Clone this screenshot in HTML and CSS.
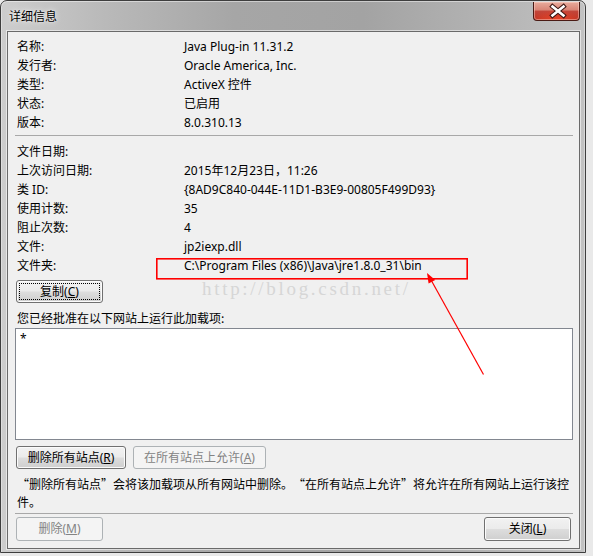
FILE: index.html
```html
<!DOCTYPE html>
<html lang="zh-CN">
<head>
<meta charset="utf-8">
<title>详细信息</title>
<link rel="stylesheet" href="styles.css">
</head>
<body>
<div class="window">
  <div class="titlebar">
    <span class="title">详细信息</span>
    <div class="close">
      <svg width="45" height="17" viewBox="0 0 45 17">
        <path d="M18.5 4.5 L29.5 13.5 M29.5 4.5 L18.5 13.5" stroke="#3a1410" stroke-width="4.6" stroke-linecap="square" fill="none"/>
        <path d="M18.5 4.5 L29.5 13.5 M29.5 4.5 L18.5 13.5" stroke="#ffffff" stroke-width="2.6" stroke-linecap="square" fill="none"/>
      </svg>
    </div>
  </div>
  <div class="panel">
    <div class="section first">
      <div class="row"><span class="label">名称:</span><span class="value">Java Plug-in 11.31.2</span></div>
      <div class="row"><span class="label">发行者:</span><span class="value">Oracle America, Inc.</span></div>
      <div class="row"><span class="label">类型:</span><span class="value">ActiveX 控件</span></div>
      <div class="row"><span class="label">状态:</span><span class="value">已启用</span></div>
      <div class="row"><span class="label">版本:</span><span class="value">8.0.310.13</span></div>
    </div>
    <div class="sep sep-top"></div>
    <div class="section second">
      <div class="row"><span class="label">文件日期:</span><span class="value"></span></div>
      <div class="row"><span class="label">上次访问日期:</span><span class="value">2015年12月23日，11:26</span></div>
      <div class="row"><span class="label">类 ID:</span><span class="value">{8AD9C840-044E-11D1-B3E9-00805F499D93}</span></div>
      <div class="row"><span class="label">使用计数:</span><span class="value">35</span></div>
      <div class="row"><span class="label">阻止次数:</span><span class="value">4</span></div>
      <div class="row"><span class="label">文件:</span><span class="value">jp2iexp.dll</span></div>
      <div class="row"><span class="label">文件夹:</span><span class="value">C:\Program Files (x86)\Java\jre1.8.0_31\bin</span></div>
    </div>
    <button class="btn focused w-copy">复制(<u>C</u>)</button>
    <div class="caption">您已经批准在以下网站上运行此加载项:</div>
    <div class="listbox"><div class="item">*</div></div>
    <div class="btnrow">
      <button class="btn w-remove">删除所有站点(<u>R</u>)</button>
      <button class="btn disabled w-allow" disabled>在所有站点上允许(<u>A</u>)</button>
    </div>
    <p class="note">“删除所有站点”会将该加载项从所有网站中删除。“在所有站点上允许”将允许在所有网站上运行该控件。</p>
    <div class="sep sep-bottom"></div>
    <div class="footer">
      <button class="btn disabled w-small" disabled>删除(<u>M</u>)</button>
      <button class="btn w-small close-btn">关闭(<u>L</u>)</button>
    </div>
  </div>
</div>
<svg class="annot" width="593" height="556" viewBox="0 0 593 556">
  <text x="202" y="295" class="watermark" textLength="206" lengthAdjust="spacing">http://blog.csdn.net/</text>
  <rect x="156.8" y="258.8" width="310.4" height="20" fill="none" stroke="#ff0000" stroke-width="1.6"/>
  <line x1="483.5" y1="374.5" x2="430.5" y2="279" stroke="#ff0000" stroke-width="1.2"/>
  <polygon points="427,273 428.6,283.6 435.2,280" fill="#ff0000"/>
</svg>
</body>
</html>
```
FILE: styles.css
```css
html, body {
  margin: 0;
  padding: 0;
}
body {
  position: relative;
  width: 593px;
  height: 556px;
  overflow: hidden;
  background: #e9e9e9;
  font-family: "Noto Sans", "Noto Sans CJK SC", sans-serif;
  font-size: 12px;
  color: #000;
  text-spacing-trim: space-all;
}
.window {
  box-sizing: border-box;
  width: 586px;
  height: 553px;
  border: 1px solid #3e3e3e;
  border-radius: 7px 7px 0 0;
  padding: 0 5px 3px 6px;
  background: linear-gradient(90deg, #cdcdcd 0%, #b9b9b9 18%, #a6a6a6 40%, #a3a3a3 62%, #b2b2b2 82%, #c2c2c2 100%);
  box-shadow: inset 0 1px 0 rgba(255,255,255,0.45), inset 1px 0 0 rgba(255,255,255,0.35), inset -1px 0 0 rgba(255,255,255,0.35);
}
.titlebar {
  height: 30px;
  display: flex;
  justify-content: space-between;
  align-items: flex-start;
}
.title {
  margin-top: 6px;
  margin-left: 2px;
  line-height: 18px;
  font-family: "Noto Sans CJK SC", sans-serif;
  font-size: 12px;
  text-shadow: 0 0 6px rgba(255,255,255,0.9), 0 0 2px rgba(255,255,255,0.8);
}
.close {
  margin-top: 1px;
  width: 47px;
  height: 19px;
  box-sizing: border-box;
  border: 1px solid #4a1a14;
  border-top: none;
  border-radius: 0 0 4px 4px;
  background:
    radial-gradient(ellipse 60% 55% at 50% 100%, rgba(240,70,40,0.9), rgba(240,70,40,0) 100%),
    linear-gradient(#e8ab9c 0%, #d98475 45%, #c4463a 50%, #b83224 100%);
  box-shadow: inset 0 0 0 1px rgba(255,220,210,0.45);
}
.close svg {
  display: block;
}
.panel {
  box-sizing: border-box;
  width: 573px;
  height: 518px;
  border: 1px solid #6a6a6a;
  background: #f0f0f0;
  padding: 0 6px 0 7px;
  box-shadow: 0 0 0 1px rgba(255,255,255,0.55);
}
.section.first {
  padding-top: 5px;
}
.section.second {
  margin-top: 6px;
}
.row {
  display: grid;
  grid-template-columns: 167px 1fr;
  padding-left: 2px;
  height: 19px;
  line-height: 19px;
  white-space: nowrap;
}
.sep {
  height: 1px;
  background: #a8a8a8;
}
.sep-top {
  margin-top: 3px;
}
.sep-bottom {
  margin-top: 2px;
}
.btn {
  display: block;
  box-sizing: border-box;
  height: 23px;
  padding: 0;
  border: 1px solid #707070;
  border-radius: 3px;
  background: linear-gradient(#f2f2f2 0%, #ebebeb 48%, #dddddd 52%, #cfcfcf 100%);
  box-shadow: inset 0 0 0 1px #fbfbfb;
  font-family: "Noto Sans", "Noto Sans CJK SC", sans-serif;
  font-size: 12px;
  line-height: 20px;
  color: #000;
  text-align: center;
}
.btn u {
  text-decoration: underline;
  text-underline-offset: 1px;
}
.btn.focused {
  margin-top: 5px;
  margin-left: 1px;
  outline: 1px dotted #000;
  outline-offset: -4px;
}
.btn.disabled {
  border-color: #adb2b5;
  background: #f4f4f4;
  box-shadow: none;
  color: #838383;
}
.w-copy { width: 87px; }
.w-remove { width: 110px; }
.w-allow { width: 133px; }
.w-small { width: 87px; height: 24px; }
.caption {
  margin-top: 6px;
  padding-left: 2px;
  line-height: 18px;
  white-space: nowrap;
  font-family: "Noto Sans CJK SC", sans-serif;
}
.listbox {
  box-sizing: border-box;
  margin-top: 1px;
  width: 558px;
  height: 112px;
  border: 1px solid #828790;
  background: #ffffff;
  padding: 2px 4px;
}
.item {
  line-height: 16px;
}
.btnrow {
  margin-top: 6px;
  margin-left: 1px;
  display: flex;
  gap: 7px;
}
.note {
  margin: 6px 0 0 0;
  padding-left: 2px;
  width: 556px;
  line-height: 18px;
  font-family: "Noto Sans CJK SC", sans-serif;
  font-size: 12px;
  text-spacing-trim: space-all;
}
.footer {
  margin-top: 3px;
  display: flex;
  justify-content: space-between;
  padding: 0 2px 0 1px;
}
.annot {
  position: absolute;
  left: 0;
  top: 0;
  pointer-events: none;
}
.watermark {
  font-family: "Liberation Serif", serif;
  font-size: 19px;
  fill: #d6d6d6;
}
```
